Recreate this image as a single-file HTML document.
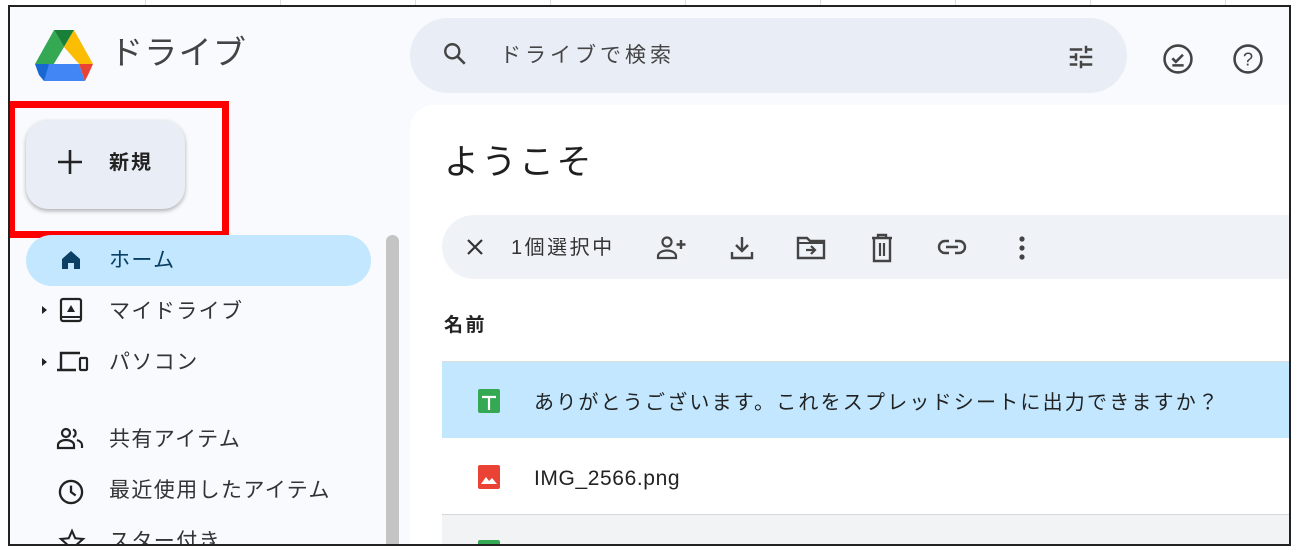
<!DOCTYPE html>
<html><head><meta charset="utf-8">
<style>
*{margin:0;padding:0;box-sizing:border-box}
body{width:1299px;height:548px;overflow:hidden;background:#fff;position:relative;font-family:"Liberation Sans","Noto Sans CJK JP",sans-serif;color:#1f1f1f}
.a{position:absolute}
.t{position:absolute;white-space:nowrap;line-height:1}
.n{letter-spacing:1.4px}
svg{position:absolute;overflow:visible}
</style></head><body>
<div class="a" style="left:145px;top:0;width:1px;height:5px;background:#ddd"></div>
<div class="a" style="left:280px;top:0;width:1px;height:5px;background:#ddd"></div>
<div class="a" style="left:415px;top:0;width:1px;height:5px;background:#ddd"></div>
<div class="a" style="left:550px;top:0;width:1px;height:5px;background:#ddd"></div>
<div class="a" style="left:685px;top:0;width:1px;height:5px;background:#ddd"></div>
<div class="a" style="left:820px;top:0;width:1px;height:5px;background:#ddd"></div>
<div class="a" style="left:955px;top:0;width:1px;height:5px;background:#ddd"></div>
<div class="a" style="left:1090px;top:0;width:1px;height:5px;background:#ddd"></div>
<div class="a" style="left:1225px;top:0;width:1px;height:5px;background:#ddd"></div>

<div class="a" style="left:8px;top:5px;width:1283px;height:541px;border:2px solid #222;background:#f8fafd;overflow:hidden"></div>
<div class="a" style="left:10px;top:7px;width:1279px;height:537px;overflow:hidden">
 <svg style="left:25px;top:23px" width="58" height="51" viewBox="0 0 58 51">
  <polygon points="19,0 39,0 29,17" fill="#188038"/>
  <polygon points="19,0 29,17 14,42 0,34" fill="#34a853"/>
  <polygon points="39,0 58,34 44,34 29,17" fill="#fbbc04"/>
  <polygon points="0,34 14,34 20,42 9,51 4,45" fill="#1967d2"/>
  <polygon points="14,34 44,34 50,51 9,51" fill="#4285f4"/>
  <polygon points="44,34 58,34 53,45 50,51" fill="#ea4335"/>
  <polygon points="21,34 37,34 29,20" fill="#f8fafd"/>
 </svg>
 <div class="t" style="left:100px;top:29px;font-size:33px;color:#444;letter-spacing:1.3px">ドライブ</div>

 <div class="a" style="left:400px;top:11px;width:717px;height:75px;border-radius:38px;background:#e9eef6"></div>
 <svg style="left:432px;top:34px" width="26" height="26" viewBox="0 0 24 24"><circle cx="9.5" cy="9.5" r="6.5" fill="none" stroke="#444" stroke-width="2.2"/><path d="M14.5 14.5 L21 21" stroke="#444" stroke-width="2.4"/></svg>
 <div class="t" style="left:490px;top:38px;font-size:21px;color:#444;letter-spacing:4px">ドライブで検索</div>
 <svg style="left:1056px;top:35px" width="30" height="30" viewBox="0 0 24 24" fill="#444"><path d="M3 17v2h6v-2H3zM3 5v2h10V5H3zm10 16v-2h8v-2h-8v-2h-2v6h2zM7 9v2H3v2h4v2h2V9H7zm14 4v-2H11v2h10zm-6-4h2V7h4V5h-4V3h-2v6z"/></svg>
 <svg style="left:1151px;top:35px" width="34" height="34" viewBox="0 0 24 24"><circle cx="12" cy="12" r="9.5" fill="none" stroke="#444" stroke-width="1.8"/><path d="M8 11.5l2.5 2.5 5-5M8 16.5h8" fill="none" stroke="#444" stroke-width="1.8"/></svg>
 <svg style="left:1221px;top:35px" width="34" height="34" viewBox="0 0 24 24"><circle cx="12" cy="12" r="9.5" fill="none" stroke="#444" stroke-width="1.8"/><text x="12" y="16.5" font-size="13" text-anchor="middle" fill="#444" font-family="Liberation Sans">?</text></svg>

 <div class="a" style="left:16px;top:113px;width:159px;height:89px;border-radius:22px;background:#e8edf6;box-shadow:0 2px 4px rgba(0,0,0,.3)"></div>
 <svg style="left:47px;top:142px" width="26" height="26" viewBox="0 0 26 26"><path d="M13 1v24M1 13h24" stroke="#222" stroke-width="2.6"/></svg>
 <div class="t" style="left:99px;top:146px;font-size:20px;color:#222;font-weight:bold;letter-spacing:2px">新規</div>
 <div class="a" style="left:-2px;top:94px;width:221px;height:137px;border:7px solid #ff0000"></div>

 <div class="a" style="left:16px;top:228px;width:345px;height:51px;border-radius:26px;background:#c2e7ff"></div>
 <svg style="left:49px;top:241px" width="24" height="24" viewBox="0 0 24 24"><path d="M3 11 L12 3 L21 11 V21 H15 V15 H9 V21 H3Z" fill="#0b3f63"/></svg>
 <div class="t n" style="left:99px;top:243px;font-size:21px;color:#0b3f63">ホーム</div>

 <svg style="left:32px;top:299px" width="6" height="8"><path d="M0 0L5 4L0 8Z" fill="#222"/></svg>
 <svg style="left:49px;top:290px" width="26" height="28" viewBox="0 0 26 28"><rect x="2" y="2" width="20" height="22" rx="2" fill="none" stroke="#222" stroke-width="2.2"/><path d="M2 20h20" stroke="#222" stroke-width="2"/><path d="M8 15 L12 8 L16 15Z" fill="#222"/></svg>
 <div class="t n" style="left:99px;top:294px;font-size:21px;color:#333">マイドライブ</div>

 <svg style="left:32px;top:351px" width="6" height="8"><path d="M0 0L5 4L0 8Z" fill="#222"/></svg>
 <svg style="left:46px;top:343px" width="34" height="24" viewBox="0 0 34 24"><path d="M5 19V3h19" fill="none" stroke="#222" stroke-width="2.4"/><path d="M1 20h19" stroke="#222" stroke-width="2.4"/><rect x="24" y="8" width="7" height="12" rx="1" fill="none" stroke="#222" stroke-width="2.2"/></svg>
 <div class="t n" style="left:99px;top:345px;font-size:21px;color:#333">パソコン</div>

 <svg style="left:46px;top:420px" width="30" height="24" viewBox="0 0 30 24"><circle cx="10" cy="6" r="4" fill="none" stroke="#222" stroke-width="2.2"/><path d="M2 21v-3c0-3 4-5 8-5s8 2 8 5v3z" fill="none" stroke="#222" stroke-width="2.2"/><path d="M17 2.5a4 4 0 0 1 0 7.5M21 13c3 1 5 3 5 5v3" fill="none" stroke="#222" stroke-width="2.2"/></svg>
 <div class="t n" style="left:99px;top:422px;font-size:21px;color:#333">共有アイテム</div>

 <svg style="left:47px;top:471px" width="28" height="28" viewBox="0 0 24 24"><circle cx="12" cy="12" r="9.5" fill="none" stroke="#222" stroke-width="2"/><path d="M12 6.5V12l4 3" fill="none" stroke="#222" stroke-width="2"/></svg>
 <div class="t n" style="left:99px;top:473px;font-size:21px;color:#333">最近使用したアイテム</div>

 <svg style="left:48px;top:521px" width="28" height="28" viewBox="0 0 24 24"><path d="M12 2.5l2.8 6.3 6.7.6-5.1 4.5 1.5 6.6L12 17l-5.9 3.5 1.5-6.6-5.1-4.5 6.7-.6z" fill="none" stroke="#222" stroke-width="1.8"/></svg>
 <div class="t n" style="left:99px;top:524px;font-size:21px;color:#333">スター付き</div>

 <div class="a" style="left:376px;top:228px;width:13px;height:330px;border-radius:7px;background:#c4c4c4"></div>

 <div class="a" style="left:400px;top:98px;width:900px;height:460px;background:#fff;border-top-left-radius:24px"></div>
 <div class="t" style="left:434px;top:138px;font-size:35px;color:#1f1f1f;letter-spacing:2.5px">ようこそ</div>

 <div class="a" style="left:432px;top:208px;width:860px;height:64px;border-top-left-radius:32px;border-bottom-left-radius:32px;background:#eff3f8"></div>
 <svg style="left:455px;top:230px" width="20" height="20" viewBox="0 0 20 20"><path d="M3 3L17 17M17 3L3 17" stroke="#333" stroke-width="2.2"/></svg>
 <div class="t" style="left:501px;top:231px;font-size:20px;color:#333;letter-spacing:2.5px">1個選択中</div>
 <svg style="left:646px;top:228px" width="32" height="26" viewBox="0 0 32 26"><circle cx="11" cy="7" r="4.5" fill="none" stroke="#444" stroke-width="2.2"/><path d="M2 23v-2c0-3 4-5.5 9-5.5s9 2.5 9 5.5v2z" fill="none" stroke="#444" stroke-width="2.2"/><path d="M25 5v9M20.5 9.5h9" stroke="#444" stroke-width="2.4"/></svg>
 <svg style="left:719px;top:227px" width="26" height="28" viewBox="0 0 26 28"><path d="M13 3v14M7 11l6 6 6-6" fill="none" stroke="#444" stroke-width="2.4"/><path d="M3 18v6h20v-6" fill="none" stroke="#444" stroke-width="2.4"/></svg>
 <svg style="left:786px;top:228px" width="30" height="26" viewBox="0 0 30 26"><path d="M2 3h9l3 3h14v17H2z" fill="none" stroke="#444" stroke-width="2.4"/><path d="M2 8h26" stroke="#444" stroke-width="2"/><path d="M10 15h9M15 11l4 4-4 4" fill="none" stroke="#444" stroke-width="2.2"/></svg>
 <svg style="left:860px;top:226px" width="24" height="30" viewBox="0 0 24 30"><path d="M2 5h20M8 5V2h8v3" fill="none" stroke="#444" stroke-width="2.4"/><path d="M4 6v22h16V6" fill="none" stroke="#444" stroke-width="2.4"/><path d="M10 10v13M14 10v13" stroke="#444" stroke-width="2.2"/></svg>
 <svg style="left:927px;top:231px" width="30" height="18" viewBox="0 0 30 18"><path d="M12 3H8a6 6 0 0 0 0 12h4M18 3h4a6 6 0 0 1 0 12h-4M9 9h12" fill="none" stroke="#444" stroke-width="2.4"/></svg>
 <svg style="left:1008px;top:228px" width="8" height="26"><circle cx="4" cy="4" r="2.6" fill="#444"/><circle cx="4" cy="13" r="2.6" fill="#444"/><circle cx="4" cy="22" r="2.6" fill="#444"/></svg>

 <div class="t" style="left:434px;top:309px;font-size:19px;color:#222;font-weight:bold;letter-spacing:2.5px">名前</div>

 <div class="a" style="left:432px;top:354px;width:860px;height:1px;background:#ddd"></div>
 <div class="a" style="left:432px;top:355px;width:860px;height:76px;background:#c2e7ff"></div>
 <div class="a" style="left:468px;top:382px;width:22px;height:24px;border-radius:2px;background:#34a853"></div>
 <svg style="left:468px;top:382px" width="22" height="24"><path d="M4 8h14M11 8v13" stroke="#fff" stroke-width="2.2"/></svg>
 <div class="t" style="left:524px;top:386px;font-size:20px;color:#222;letter-spacing:2.2px">ありがとうございます。これをスプレッドシートに出力できますか？</div>

 <svg style="left:468px;top:458px" width="22" height="24"><rect width="22" height="24" rx="2" fill="#ea4335"/><path d="M3 19L8 12l3 4 3-3 5 6z" fill="#fff"/></svg>
 <div class="t" style="left:524px;top:461px;font-size:21px;color:#222;letter-spacing:0.6px">IMG_2566.png</div>

 <div class="a" style="left:432px;top:507px;width:860px;height:1px;background:#d6d6d6"></div>
 <div class="a" style="left:432px;top:508px;width:860px;height:40px;background:#f1f3f4"></div>
 <div class="a" style="left:468px;top:533px;width:22px;height:24px;border-radius:2px;background:#34a853"></div>
</div>
</body></html>
